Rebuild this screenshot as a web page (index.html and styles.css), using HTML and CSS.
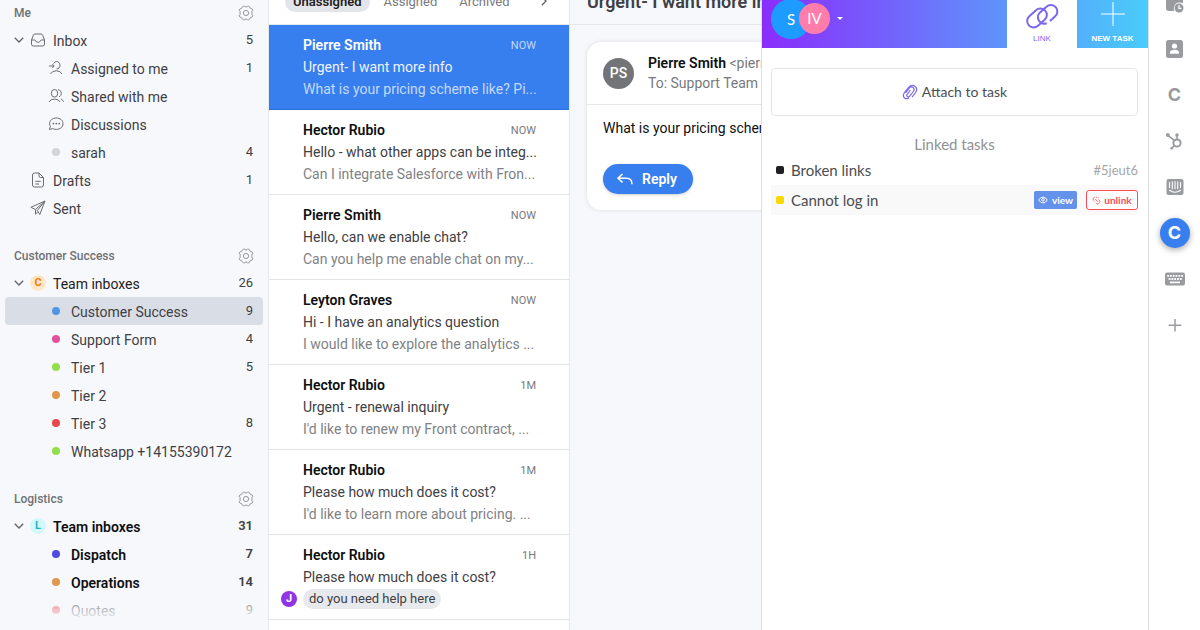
FILE: index.html
```html
<!DOCTYPE html>
<html lang="en">
<head>
<meta charset="utf-8">
<title>Team inboxes</title>
<link rel="stylesheet" href="styles.css">
</head>
<body>
<svg class="defs" aria-hidden="true">
  <symbol id="gear" viewBox="0 0 16 16"><path d="M6.3.9q.5 1.100 1.700 1.100T9.700.9q1.200 0 1.700.9.200 1.300 1.600 1.700 1.500.3 1.800 1.600-.1.900-.9 1.500v2.800q.8.600.9 1.500-.3 1.300-1.800 1.600-1.400.4-1.600 1.700-.5.9-1.700.9-.5-1.100-1.700-1.100t-1.700 1.100q-1.200 0-1.700-.9-.2-1.300-1.600-1.700-1.500-.3-1.800-1.600.1-.9.9-1.500V6.600Q1.300 6 1.200 5.100q.3-1.300 1.800-1.600 1.400-.4 1.600-1.700.5-.9 1.700-.9z"/><circle cx="8" cy="8" r="2.600"/></symbol>
  <symbol id="chevron" viewBox="0 0 10 6"><path d="M.8.8 5 5 9.200.8"/></symbol>
</svg>
<div class="app">
  <nav class="sidebar" aria-label="Inboxes">
    <section class="group">
      <header class="group-head"><h2>Me</h2><button class="gear" aria-label="Settings"><svg><use href="#gear"/></svg></button></header>
      <a class="row top" href="#"><svg class="chev"><use href="#chevron"/></svg><span class="glyph"><svg class="line" viewBox="0 0 16 16"><path d="M1.500 8 3.300 3.200Q3.700 2 5 2h6q1.300 0 1.700 1.200L14.500 8v4.200q0 1.800-1.800 1.800H3.300q-1.800 0-1.800-1.800zM1.500 8h3q.9 0 1.200 1 .5 1.300 2.300 1.300T10.300 9q.3-1 1.200-1h3"/></svg></span><span class="label">Inbox</span><span class="count">5</span></a>
      <a class="row sub" href="#"><span class="glyph"><svg class="line" viewBox="0 0 16 16"><path d="M5.500 3.500Q6.500 1.500 8.500 1.500c2 0 3.500 1.500 3.500 3.700S10.500 9 8.600 9M2.500 14q1.600-3.200 5.800-3.200T14 14M1 6h5M4.200 4 6.200 6l-2 2"/></svg></span><span class="label">Assigned to me</span><span class="count">1</span></a>
      <a class="row sub" href="#"><span class="glyph"><svg class="line" viewBox="0 0 16 16"><ellipse cx="6.500" cy="5.300" rx="3.200" ry="3.800"/><path d="M1 14q1.300-3 5.500-3T12 14M10 1.800c2 0 3.300 1.400 3.300 3.500 0 1.800-1 3-2.300 3.500M12.800 11q2 .8 2.700 2.700"/></svg></span><span class="label">Shared with me</span></a>
      <a class="row sub" href="#"><span class="glyph"><svg class="line" viewBox="0 0 16 16"><path d="M1.300 13.500 2.400 10.600C1.900 9.700 1.600 8.700 1.600 7.700 1.600 4.300 4.500 2 8.300 2S15 4.300 15 7.700s-2.900 5.700-6.700 5.700q-2 0-3.700-.8z"/></svg><svg class="solid over" viewBox="0 0 16 16"><circle cx="5.400" cy="7.600" r=".9"/><circle cx="8.300" cy="7.600" r=".9"/><circle cx="11.200" cy="7.600" r=".9"/></svg></span><span class="label">Discussions</span></a>
      <a class="row sub" href="#"><span class="glyph"><i class="dot silver"></i></span><span class="label">sarah</span><span class="count">4</span></a>
      <a class="row nochev" href="#"><span class="glyph"><svg class="line" viewBox="0 0 16 16"><path d="M2.500 3q0-2 2-2H9l4.500 4.500V13q0 2-2 2h-7q-2 0-2-2zM9 1v3q0 1.500 1.500 1.500h3M5.300 9.300h5.400M5.300 12h3.700"/></svg></span><span class="label">Drafts</span><span class="count">1</span></a>
      <a class="row nochev" href="#"><span class="glyph"><svg class="line" viewBox="0 0 16 16"><path d="M15 1 .9 7.300 5.500 9.500 15 1 9.800 14.500 7.300 10.500 15 1M5.500 9.500v4.800l2.200-2.500"/></svg></span><span class="label">Sent</span></a>
    </section>
    <section class="group">
      <header class="group-head"><h2>Customer Success</h2><button class="gear" aria-label="Settings"><svg><use href="#gear"/></svg></button></header>
      <a class="row top medium" href="#"><svg class="chev"><use href="#chevron"/></svg><span class="glyph"><b class="team orange">C</b></span><span class="label">Team inboxes</span><span class="count">26</span></a>
      <a class="row sub selected" href="#"><span class="glyph"><i class="dot blue"></i></span><span class="label">Customer Success</span><span class="count">9</span></a>
      <a class="row sub" href="#"><span class="glyph"><i class="dot pink"></i></span><span class="label">Support Form</span><span class="count">4</span></a>
      <a class="row sub" href="#"><span class="glyph"><i class="dot green"></i></span><span class="label">Tier 1</span><span class="count">5</span></a>
      <a class="row sub" href="#"><span class="glyph"><i class="dot amber"></i></span><span class="label">Tier 2</span></a>
      <a class="row sub" href="#"><span class="glyph"><i class="dot red"></i></span><span class="label">Tier 3</span><span class="count">8</span></a>
      <a class="row sub" href="#"><span class="glyph"><i class="dot green"></i></span><span class="label">Whatsapp +14155390172</span></a>
    </section>
    <section class="group">
      <header class="group-head"><h2>Logistics</h2><button class="gear" aria-label="Settings"><svg><use href="#gear"/></svg></button></header>
      <a class="row top bold" href="#"><svg class="chev"><use href="#chevron"/></svg><span class="glyph"><b class="team teal">L</b></span><span class="label">Team inboxes</span><span class="count">31</span></a>
      <a class="row sub bold" href="#"><span class="glyph"><i class="dot indigo"></i></span><span class="label">Dispatch</span><span class="count">7</span></a>
      <a class="row sub bold" href="#"><span class="glyph"><i class="dot amber"></i></span><span class="label">Operations</span><span class="count">14</span></a>
      <a class="row sub" href="#"><span class="glyph"><i class="dot red"></i></span><span class="label">Quotes</span><span class="count">9</span></a>
    </section>
  </nav>

  <section class="list" aria-label="Conversations">
    <div class="tabs">
      <button class="tab on">Unassigned</button><button class="tab">Assigned</button><button class="tab">Archived</button>
      <button class="more" aria-label="More"><svg viewBox="0 0 6 10"><path d="M.8.8 5 5 .8 9.200"/></svg></button>
    </div>
    <article class="item active"><header><h3>Pierre Smith</h3><time>NOW</time></header><p>Urgent- I want more info</p><p class="preview">What is your pricing scheme like? Pi...</p></article>
    <article class="item"><header><h3>Hector Rubio</h3><time>NOW</time></header><p>Hello - what other apps can be integ...</p><p class="preview">Can I integrate Salesforce with Fron...</p></article>
    <article class="item"><header><h3>Pierre Smith</h3><time>NOW</time></header><p>Hello, can we enable chat?</p><p class="preview">Can you help me enable chat on my...</p></article>
    <article class="item"><header><h3>Leyton Graves</h3><time>NOW</time></header><p>Hi - I have an analytics question</p><p class="preview">I would like to explore the analytics ...</p></article>
    <article class="item"><header><h3>Hector Rubio</h3><time>1M</time></header><p>Urgent - renewal inquiry</p><p class="preview">I'd like to renew my Front contract, ...</p></article>
    <article class="item"><header><h3>Hector Rubio</h3><time>1M</time></header><p>Please how much does it cost?</p><p class="preview">I'd like to learn more about pricing. ...</p></article>
    <article class="item"><header><h3>Hector Rubio</h3><time>1H</time></header><p>Please how much does it cost?</p><p class="comment"><b class="author">J</b><span>do you need help here</span></p></article>
  </section>

  <main class="thread">
    <div class="subject"><h1>Urgent- I want more info</h1></div>
    <article class="card">
      <header class="card-head">
        <span class="face">PS</span>
        <div class="who"><div><strong>Pierre Smith</strong> &lt;pierre@smith.com&gt;</div><div>To: Support Team</div></div>
      </header>
      <div class="card-body">
        <p>What is your pricing scheme like?</p>
        <button class="reply"><svg viewBox="0 0 16 12"><path d="M5.500 1 1 5.200l4.500 4.200M1 5.200h8.500q5.500 0 5.500 6"/></svg>Reply</button>
      </div>
    </article>
  </main>

  <aside class="panel" aria-label="Tasks">
    <header class="panel-head">
      <button class="users" aria-label="Users"><span class="user big">S</span><span class="user small">IV</span><i class="caret"></i></button>
      <button class="action link"><svg viewBox="0 0 34 26"><rect x="1" y="8.500" width="22" height="13" rx="6.500" transform="rotate(-42 12 15)"/><path transform="rotate(-42 22.500 11.500)" d="M16 17.500A6.500 6.500 0 0 1 18 5h9a6.500 6.500 0 0 1 0 13h-7"/></svg>LINK</button>
      <button class="action new"><svg viewBox="0 0 24 24"><path d="M12 0v24M0 12h24"/></svg>NEW TASK</button>
    </header>
    <div class="panel-body">
      <button class="attach"><svg viewBox="0 0 16 16"><path d="M3.500 8.800 7 4.300q2-2.300 4-.8t.3 4L7.700 12.200q-1.200 1.300-2.300.4t-.2-2.300L8.500 6M10 13.200l3.600-4.700q2.400-3.800-.6-6.200-3.300-2.200-6.300 1L2.300 8.800q-2 3.200.2 5.200 2.500 1.600 4.500-.3"/></svg>Attach to task</button>
      <h2 class="linked">Linked tasks</h2>
      <ul class="tasks">
        <li><i class="status black"></i><span class="task">Broken links</span><span class="id">#5jeut6</span></li>
        <li class="hover"><i class="status yellow"></i><span class="task">Cannot log in</span>
          <button class="mini view"><svg viewBox="0 0 10 8"><path d="M.7 4Q2.500 1 5 1t4.300 3Q7.500 7 5 7T.7 4z"/><circle cx="5" cy="3.800" r="1.300"/></svg>view</button>
          <button class="mini unlink"><svg viewBox="0 0 10 10"><path d="M3 1.200 1.700 2.500q-1 1.200 0 2.300l1 .9M7.300 4l1.200 1.200q.8 1 0 2L7.300 8.500q-1 .8-2 0L4.200 7.400M3.800 3.500l2.800 3M5 .8v1.200M7.500 1.500l-.8.9"/></svg>unlink</button></li>
      </ul>
    </div>
  </aside>

  <nav class="rail" aria-label="Apps">
    <button class="first" aria-label="Calendar"><svg viewBox="0 0 20 20"><path fill="#999b9e" d="M4 0h11q3 0 3 3v6.200Q11 7 9 13q-.4 2 .2 4H4q-3 0-3-3V3q0-3 3-3z"/><circle cx="14" cy="14" r="4.500" fill="#999b9e"/><path d="M14 11.300V14.300h2.300" fill="none" stroke="#fff" stroke-width="1.300"/></svg></button>
    <button aria-label="Contacts"><svg viewBox="0 0 20 20"><rect x="1" y="1" width="17" height="18" rx="2.500" fill="#999b9e"/><circle cx="9.500" cy="7" r="2.600" fill="#fff"/><path fill="#fff" d="M5 14.800v-1q0-3 4.500-3t4.500 3v1z"/></svg></button>
    <button class="letter">C</button>
    <button aria-label="HubSpot"><svg viewBox="0 0 20 20"><g fill="none" stroke="#999b9e"><circle cx="12" cy="12" r="3.600" stroke-width="2"/><path stroke-width="1.500" d="M12 8.500V4.500M9.300 9.300 3 4.300M9.500 14.500 7 17"/></g><g fill="#999b9e"><circle cx="12" cy="4" r="1.700"/><circle cx="2.800" cy="4" r="1.900"/><circle cx="6.800" cy="17.200" r="1.400"/></g></svg></button>
    <button aria-label="Intercom"><svg viewBox="0 0 20 20"><rect x="1.500" y="2" width="17" height="16" rx="2" fill="#999b9e"/><path fill="none" stroke="#fff" stroke-width="1.100" stroke-linecap="round" d="M4.500 5.500v5M7.300 4.700v7M10 4.500v7.300M12.700 4.700v7M15.500 5.500v5M4.500 13.300q5.500 4 11 0"/></svg></button>
    <button class="letter current">C</button>
    <button aria-label="Shortcuts"><svg viewBox="0 0 20 20"><rect y="3.500" width="20" height="13" rx="2" fill="#999b9e"/><path fill="none" stroke="#fff" stroke-width="1.800" stroke-dasharray="1.800 1" d="M2.200 6.900h16M3.700 10h13"/><path stroke="#fff" stroke-width="1.700" d="M5 13.400h10"/></svg></button>
    <button aria-label="Add"><svg viewBox="0 0 20 20"><path stroke="#999b9e" stroke-width="1.500" d="M10 4v12.500M3.700 10.300h12.600"/></svg></button>
  </nav>
</div>
</body>
</html>
```

FILE: styles.css
```css
* { box-sizing: border-box; margin: 0; }
body { font: 14px/22px Roboto, "Liberation Sans", sans-serif; color: #3f4043; }
button { border: 0; background: none; padding: 0; font: inherit; color: inherit; cursor: pointer; }
a { color: inherit; text-decoration: none; }
.defs { display: none; }
.app { display: flex; height: 100vh; overflow: hidden; background: #f7f8fb; }

/* Sidebar */
.sidebar { position: relative; flex: 0 0 269px; overflow: hidden; border-right: 1px solid #e6e7ea; padding: 0 5px; }
.sidebar::after { content: ""; position: absolute; left: 0; right: 0; bottom: 0; height: 44px; background: linear-gradient(#f7f8fb00, #f7f8fb 80%); }
.group + .group { margin-top: 21px; }
.group-head { display: flex; align-items: center; justify-content: space-between; height: 26px; padding: 0 9px; }
.group-head h2 { font-size: 12px; font-weight: 500; color: #6f7174; }
.gear, .gear svg { display: block; width: 16px; height: 16px; }
.gear svg { fill: none; stroke: #95979b; }
.row { display: flex; align-items: center; height: 28px; padding: 0 10px 0 9px; border-radius: 4px; }
.row.nochev { padding-left: 25px; }
.row.sub { padding-left: 43px; }
.row.selected { background: #d9dde6; }
.chev { width: 10px; height: 6px; margin-right: 6px; fill: none; stroke: #606265; stroke-width: 1.3; }
.glyph { position: relative; display: flex; flex: 0 0 16px; justify-content: center; margin-right: 7px; }
.glyph svg { width: 16px; height: 16px; }
.line { fill: none; stroke: #6a6c6f; stroke-linejoin: round; }
.solid { fill: #6a6c6f; }
.over { position: absolute; inset: 0; }
.dot { width: 8px; height: 8px; border-radius: 50%; }
.silver { background: #d3d4d8; }
.blue { background: #4f97e3; }
.pink { background: #e5509c; }
.green { background: #93df4b; }
.amber { background: #e2964b; }
.red { background: #e5484d; }
.indigo { background: #4e4be0; }
.team { flex: none; width: 16px; border-radius: 50%; font-size: 11px; line-height: 16px; font-weight: 700; text-align: center; }
.orange { background: #ffe6c9; color: #f0810f; }
.teal { background: #d3f8fb; color: #2fb0bd; }
.label { flex: 1; white-space: nowrap; padding-top: 2px; }
.count { font-size: 13px; }
.medium .label { color: #1f2022; }
.bold { font-weight: 600; }
.bold .label { color: #0e0f10; }

/* Conversation list */
.list { flex: 0 0 301px; min-width: 0; background: #fff; border-right: 1px solid #e6e7ea; }
.tabs { display: flex; align-items: flex-end; height: 25px; padding: 0 22px 12px 16px; border-bottom: 1px solid #e6e7ea; font-size: 13px; }
.tab { height: 20px; padding: 0 8px; margin-right: 6px; border-radius: 10px; line-height: 20px; color: #77797c; }
.tab.on { background: #e4e5ea; color: #1f2022; font-weight: 600; }
.more { margin-left: auto; }
.more svg { display: block; width: 6px; height: 12px; margin-bottom: 5px; fill: none; stroke: #606265; stroke-width: 1.3; }
.item { height: 85px; padding: 9px 33px 9px 34px; border-bottom: 1px solid #e4e5e8; white-space: nowrap; }
.item header { display: flex; justify-content: space-between; }
.item h3 { font-size: 14px; font-weight: 600; color: #0e0f10; }
.item time { font-size: 11px; line-height: 24px; height: 22px; color: #77797c; }
.preview { color: #808285; }
.item.active { background: #377eef; border-color: #2f6fd8; color: #eef4fe; }
.active h3 { color: #fff; }
.item.active time, .active .preview { color: #c5d9fb; }
.comment { position: relative; display: flex; }
.comment span { line-height: 20px; margin-top: 1px; padding: 0 6px; border-radius: 10px; background: #e8e9ed; font-size: 13px; }
.author { position: absolute; left: -22px; top: 3px; width: 16px; border-radius: 50%; background: #9233e6; color: #fff; font-size: 11px; line-height: 16px; text-align: center; }

/* Thread */
.thread { flex: 1; min-width: 0; overflow: hidden; white-space: nowrap; }
.subject { display: flex; align-items: flex-end; height: 25px; padding: 0 17px 9px; border-bottom: 1px solid #e6e7ea; }
.subject h1 { font-size: 18px; line-height: 26px; font-weight: 600; color: #3f4043; }
.card { width: max-content; min-width: 100%; margin: 17px; background: #fff; border-radius: 14px; box-shadow: 0 0 4px #0000001f; }
.card-head { display: flex; align-items: center; gap: 14px; height: 63px; padding: 0 16px; border-bottom: 1px solid #e6e7ea; }
.face { width: 31px; border-radius: 50%; background: #737477; color: #fff; font-size: 14px; line-height: 31px; font-weight: 500; text-align: center; }
.who { line-height: 20px; color: #77797c; }
.who strong { font-weight: 600; color: #0e0f10; }
.card-body { padding: 12px 16px 16px; color: #0e0f10; }
.reply { display: flex; align-items: center; gap: 9px; height: 30px; margin-top: 25px; padding: 0 16px 0 14px; border-radius: 15px; background: #377eef; color: #fff; font-weight: 600; box-shadow: 0 1px 3px #00000033; }
.reply svg { width: 16px; height: 12px; fill: none; stroke: #fff; stroke-width: 1.5; }

/* Task panel */
.panel { position: relative; flex: 0 0 388px; background: #fff; border: solid #dcdddf; border-width: 0 1px; font-family: Lato, "Open Sans", sans-serif; }
.panel-head { display: flex; height: 48px; background: linear-gradient(90deg, #8a2dfb, #5f92fb 62%, #49ccfa); color: #fff; }
.users { display: flex; align-items: center; margin-right: auto; padding: 0 0 11px 9px; font-size: 15px; }
.user { border-radius: 50%; text-align: center; }
.big { width: 40px; line-height: 40px; background: #1e9bff; }
.small { width: 31px; margin-left: -12px; line-height: 31px; background: #ff7cab; }
.caret { margin-left: 7px; border: 3px solid transparent; border-top-color: #fff; border-bottom: 0; }
.action { display: flex; flex-direction: column; align-items: center; justify-content: flex-end; font: 600 8px/12px "Liberation Sans", sans-serif; padding-bottom: 3px; }
.action svg { fill: none; stroke: currentColor; }
.link { flex: 0 0 70px; background: #fff; color: #7b68ee; font-weight: 400; }
.link svg { width: 34px; height: 26px; margin-bottom: 4px; stroke-width: 2; }
.new { flex: 0 0 71px; }
.new svg { width: 24px; height: 24px; margin-bottom: 7px; }
.panel-body { padding: 20px 10px 0 9px; }
.attach { display: flex; align-items: center; justify-content: center; gap: 4px; width: 100%; height: 48px; border: 1px solid #e5e6e8; border-radius: 4px; font-size: 14px; color: #4b4d50; }
.attach svg { width: 16px; height: 16px; fill: none; stroke: #7b68ee; stroke-width: 1.2; }
.linked { margin-top: 17px; font-size: 15px; font-weight: 400; text-align: center; color: #909193; }
.tasks { list-style: none; padding: 0; }
.tasks li { display: flex; align-items: center; height: 30px; padding-left: 5px; }
.tasks .hover { background: #f9f9fa; }
.status { width: 8px; height: 8px; margin-right: 7px; border-radius: 2px; }
.black { background: #202124; }
.yellow { background: #f9d900; }
.task { flex: 1; font-size: 15px; color: #4b4d50; }
.id { font-size: 13px; color: #a6a7a9; }
.mini { display: flex; align-items: center; justify-content: center; gap: 4px; height: 18px; margin-left: 9px; border-radius: 2px; font-size: 10px; font-weight: 700; }
.mini svg { fill: none; stroke: currentColor; }
.view { width: 43px; background: #6491ea; color: #fff; }
.view svg { width: 10px; height: 8px; }
.unlink { width: 52px; height: 20px; gap: 3px; border: 1px solid #fb4b58; border-radius: 3px; background: #fff; color: #fb4b58; }
.unlink svg { width: 9px; height: 9px; }

/* App rail */
.rail { display: flex; flex-direction: column; align-items: center; gap: 16px; flex: 0 0 51px; background: #fff; font-family: Inter, "Liberation Sans", sans-serif; }
.rail button { display: flex; align-items: center; justify-content: center; flex: none; width: 30px; height: 30px; border-radius: 50%; }
.rail svg { width: 20px; height: 20px; }
.rail .first { height: 18px; align-items: flex-end; padding-bottom: 4px; }
.rail .letter { font-size: 18px; font-weight: 700; color: #999b9e; }
.rail .current { background: #377eef; color: #fff; box-shadow: 0 2px 6px #00000055; }
```
